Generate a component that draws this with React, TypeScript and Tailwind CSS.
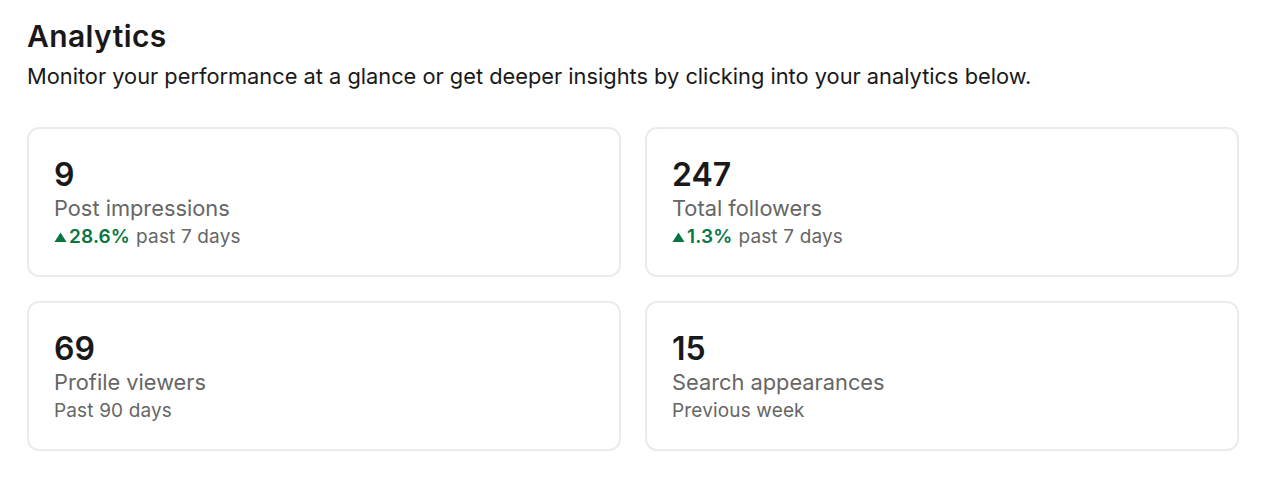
import React from "react";

type Stat = { value: string; label: string; change?: string; sub: string };

const stats: Stat[] = [
  { value: "9", label: "Post impressions", change: "28.6%", sub: "past 7 days" },
  { value: "247", label: "Total followers", change: "1.3%", sub: "past 7 days" },
  { value: "69", label: "Profile viewers", sub: "Past 90 days" },
  { value: "15", label: "Search appearances", sub: "Previous week" },
];

function Card({ s }: { s: Stat }) {
  return (
    <div className="h-[150px] rounded-[12px] border-2 border-[#ebebeb] bg-white px-[25px] pt-[26px]">
      <div className="text-[32px] font-semibold leading-[40px] text-[#191919]">{s.value}</div>
      <div className="text-[21.8px] leading-[26px] text-[#666666]">{s.label}</div>
      <div className="mt-[4px] flex items-center text-[19px] leading-[24px] tracking-[0.15px] text-[#666666]">
        {s.change && (
          <>
            <svg width="13" height="11" viewBox="0 0 13 11" className="mr-[2px] mt-[1px]">
              <path d="M6.5 0.5 L12.5 10 L0.5 10 Z" fill="#057642" />
            </svg>
            <span className="mr-[6px] font-semibold text-[#057642]">{s.change}</span>
          </>
        )}
        <span>{s.sub}</span>
      </div>
    </div>
  );
}

export default function App() {
  return (
    <div
      className="min-h-[482px] w-[1268px] bg-white px-[27px] pt-[16px]"
      style={{ fontFamily: "Inter, 'Noto Sans', sans-serif" }}
    >
      <h1 className="text-[30px] font-semibold leading-[40px] tracking-[0.4px] text-[#191919]">Analytics</h1>
      <p className="mt-[4px] text-[21.8px] leading-[32px] text-[#191919]">
        Monitor your performance at a glance or get deeper insights by clicking into your analytics below.
      </p>
      <div className="mt-[35px] grid w-[1212px] grid-cols-2 gap-[24px]">
        {stats.map((s) => (
          <Card key={s.label} s={s} />
        ))}
      </div>
    </div>
  );
}
